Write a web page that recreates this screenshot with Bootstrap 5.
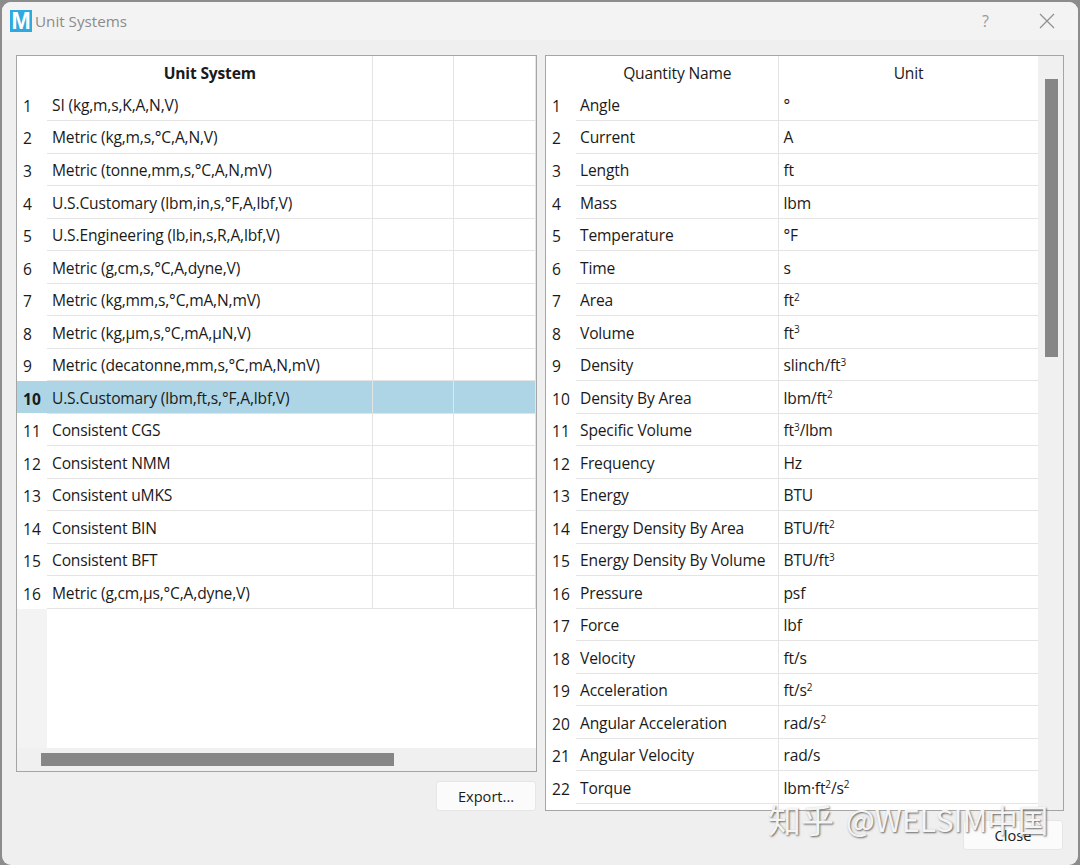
<!DOCTYPE html>
<html lang="en">
<head>
<meta charset="utf-8">
<title>Unit Systems</title>
<link href="https://cdn.jsdelivr.net/npm/bootstrap@5.3.0/dist/css/bootstrap.min.css" rel="stylesheet">
<style>
html,body{margin:0;height:865px;overflow:hidden;background:#8c8c8c;}
body{font-family:"Open Sans","Noto Sans",sans-serif;color:#1a1a1a;}
.win{height:863px;margin:2px 2px 0 2px;background:#efefef;border-radius:9px;position:relative;overflow:hidden;display:flex;flex-direction:column;}
.tbar{height:38px;flex:none;background:#f3f3f3;padding-left:8px;gap:3px;}
.logo{width:22px;height:22px;background:#2fa9df;color:#fff;font:700 23px/22px "Liberation Sans",sans-serif;text-align:center;}
.ttl{font-size:15.2px;color:#8b8b8b;}
.tq{font-size:16px;color:#999;margin-right:47px;}
.tx{margin-right:23px;}
.bodyw{padding:15px 0 0 14px;gap:8px;}
.lcol{width:521px;flex:none;}
.rcol{width:519px;flex:none;}
.pane{background:#fff;border:1px solid #a5a5a5;overflow:hidden;}
.lpane{height:717px;display:flex;flex-direction:column;}
.rpane{height:756px;display:flex;}
.ugrid{table-layout:fixed;border-collapse:collapse;font-size:15.6px;letter-spacing:-.17px;line-height:1;}
.ugrid td,.ugrid th{height:32.53px;padding:3px 0 0 5px;font-weight:400;border-right:1px solid #e4e4e4;border-bottom:1px solid #e4e4e4;white-space:nowrap;overflow:hidden;background:#fff;}
.ugrid thead th{height:32px;border-bottom:0;text-align:center;padding:3px 0 0 1px;}
.ugrid th.rn{border:0;text-align:left;padding:5px 0 0 6px;font-size:15.6px;letter-spacing:0;}
.ugrid thead th.rn{padding:0;}
.ugrid tr.sel td{background:#add5e5;}
.ugrid tr.sel th.rn{background:#add5e5;font-weight:700;}
.ugrid thead th.hb{font-weight:700;}
.ugrid sup{font-size:10px;top:-.55em;letter-spacing:0;}
.ltbl{width:518px;}
.rtbl{width:492px;}
.rtbl tbody td:nth-child(2){padding-left:4px;}
.lspace{flex:1;display:flex;}
.lgut{width:30px;background:#f3f3f3;}
.hscroll{height:23px;flex:none;background:#f0f0f0;padding:5px 0 0 24px;}
.hthumb{width:353px;height:13px;background:#868686;}
.vscroll{width:25px;flex:none;background:#f0f0f0;padding:23px 0 0 7px;}
.vthumb{width:13px;height:278px;background:#868686;}
.qbtn{background:#fbfbfb;border:1px solid #e6e6e6;border-radius:3px;color:#1a1a1a;font-size:14.6px;padding:0;height:30px;line-height:1;}
.expb{width:100px;margin:9px 1px 0 auto;display:block;}
.clob{width:100px;position:absolute;right:15px;top:818px;}
.wm{position:absolute;left:766px;top:800px;line-height:34px;color:#f4f4f4;text-shadow:1px 1px 2px #666;font-family:"Noto Sans CJK SC","Noto Sans",sans-serif;white-space:nowrap;display:flex;align-items:center;gap:12px;}
.wma{font-size:33px;}
.wmb{font-size:30.5px;}
</style>
</head>
<body>
<div class="win">
  <div class="tbar d-flex align-items-center">
    <div class="logo">M</div>
    <div class="ttl">Unit Systems</div>
    <div class="tq ms-auto">?</div>
    <svg class="tx" width="16" height="16" viewBox="0 0 16 16"><path d="M1 1 15 15M15 1 1 15" stroke="#8f8f8f" stroke-width="1.2" fill="none"/></svg>
  </div>
  <div class="bodyw d-flex flex-grow-1">
    <div class="lcol">
      <div class="pane lpane">
        <table class="ugrid ltbl">
          <colgroup><col style="width:30px"><col style="width:325px"><col style="width:81px"><col style="width:82px"></colgroup>
          <thead><tr><th class="rn"></th><th class="hb">Unit System</th><th></th><th></th></tr></thead>
          <tbody>
          <tr><th class="rn">1</th><td>SI (kg,m,s,K,A,N,V)</td><td></td><td></td></tr>
          <tr><th class="rn">2</th><td>Metric (kg,m,s,°C,A,N,V)</td><td></td><td></td></tr>
          <tr><th class="rn">3</th><td>Metric (tonne,mm,s,°C,A,N,mV)</td><td></td><td></td></tr>
          <tr><th class="rn">4</th><td>U.S.Customary (lbm,in,s,°F,A,lbf,V)</td><td></td><td></td></tr>
          <tr><th class="rn">5</th><td>U.S.Engineering (lb,in,s,R,A,lbf,V)</td><td></td><td></td></tr>
          <tr><th class="rn">6</th><td>Metric (g,cm,s,°C,A,dyne,V)</td><td></td><td></td></tr>
          <tr><th class="rn">7</th><td>Metric (kg,mm,s,°C,mA,N,mV)</td><td></td><td></td></tr>
          <tr><th class="rn">8</th><td>Metric (kg,μm,s,°C,mA,μN,V)</td><td></td><td></td></tr>
          <tr><th class="rn">9</th><td>Metric (decatonne,mm,s,°C,mA,N,mV)</td><td></td><td></td></tr>
          <tr class="sel"><th class="rn">10</th><td>U.S.Customary (lbm,ft,s,°F,A,lbf,V)</td><td></td><td></td></tr>
          <tr><th class="rn">11</th><td>Consistent CGS</td><td></td><td></td></tr>
          <tr><th class="rn">12</th><td>Consistent NMM</td><td></td><td></td></tr>
          <tr><th class="rn">13</th><td>Consistent uMKS</td><td></td><td></td></tr>
          <tr><th class="rn">14</th><td>Consistent BIN</td><td></td><td></td></tr>
          <tr><th class="rn">15</th><td>Consistent BFT</td><td></td><td></td></tr>
          <tr><th class="rn">16</th><td>Metric (g,cm,μs,°C,A,dyne,V)</td><td></td><td></td></tr>
          </tbody>
        </table>
        <div class="lspace"><div class="lgut"></div></div>
        <div class="hscroll"><div class="hthumb"></div></div>
      </div>
      <button type="button" class="btn qbtn expb">Export...</button>
    </div>
    <div class="rcol">
      <div class="pane rpane">
        <div class="flex-grow-1 overflow-hidden">
        <table class="ugrid rtbl">
          <colgroup><col style="width:30px"><col style="width:202px"><col style="width:260px"></colgroup>
          <thead><tr><th class="rn"></th><th>Quantity Name</th><th>Unit</th></tr></thead>
          <tbody>
          <tr><th class="rn">1</th><td>Angle</td><td>°</td></tr>
          <tr><th class="rn">2</th><td>Current</td><td>A</td></tr>
          <tr><th class="rn">3</th><td>Length</td><td>ft</td></tr>
          <tr><th class="rn">4</th><td>Mass</td><td>lbm</td></tr>
          <tr><th class="rn">5</th><td>Temperature</td><td>°F</td></tr>
          <tr><th class="rn">6</th><td>Time</td><td>s</td></tr>
          <tr><th class="rn">7</th><td>Area</td><td>ft<sup>2</sup></td></tr>
          <tr><th class="rn">8</th><td>Volume</td><td>ft<sup>3</sup></td></tr>
          <tr><th class="rn">9</th><td>Density</td><td>slinch/ft<sup>3</sup></td></tr>
          <tr><th class="rn">10</th><td>Density By Area</td><td>lbm/ft<sup>2</sup></td></tr>
          <tr><th class="rn">11</th><td>Specific Volume</td><td>ft<sup>3</sup>/lbm</td></tr>
          <tr><th class="rn">12</th><td>Frequency</td><td>Hz</td></tr>
          <tr><th class="rn">13</th><td>Energy</td><td>BTU</td></tr>
          <tr><th class="rn">14</th><td>Energy Density By Area</td><td>BTU/ft<sup>2</sup></td></tr>
          <tr><th class="rn">15</th><td>Energy Density By Volume</td><td>BTU/ft<sup>3</sup></td></tr>
          <tr><th class="rn">16</th><td>Pressure</td><td>psf</td></tr>
          <tr><th class="rn">17</th><td>Force</td><td>lbf</td></tr>
          <tr><th class="rn">18</th><td>Velocity</td><td>ft/s</td></tr>
          <tr><th class="rn">19</th><td>Acceleration</td><td>ft/s<sup>2</sup></td></tr>
          <tr><th class="rn">20</th><td>Angular Acceleration</td><td>rad/s<sup>2</sup></td></tr>
          <tr><th class="rn">21</th><td>Angular Velocity</td><td>rad/s</td></tr>
          <tr><th class="rn">22</th><td>Torque</td><td>lbm·ft<sup>2</sup>/s<sup>2</sup></td></tr>
          <tr><th class="rn"></th><td></td><td></td></tr>
          </tbody>
        </table>
        </div>
        <div class="vscroll"><div class="vthumb"></div></div>
      </div>
    </div>
  </div>
  <button type="button" class="btn qbtn clob">Close</button>
  <div class="wm"><span class="wma">知乎</span><span class="wmb">@WELSIM中国</span></div>
</div>
<script src="https://cdn.jsdelivr.net/npm/bootstrap@5.3.0/dist/js/bootstrap.bundle.min.js"></script>
</body>
</html>
